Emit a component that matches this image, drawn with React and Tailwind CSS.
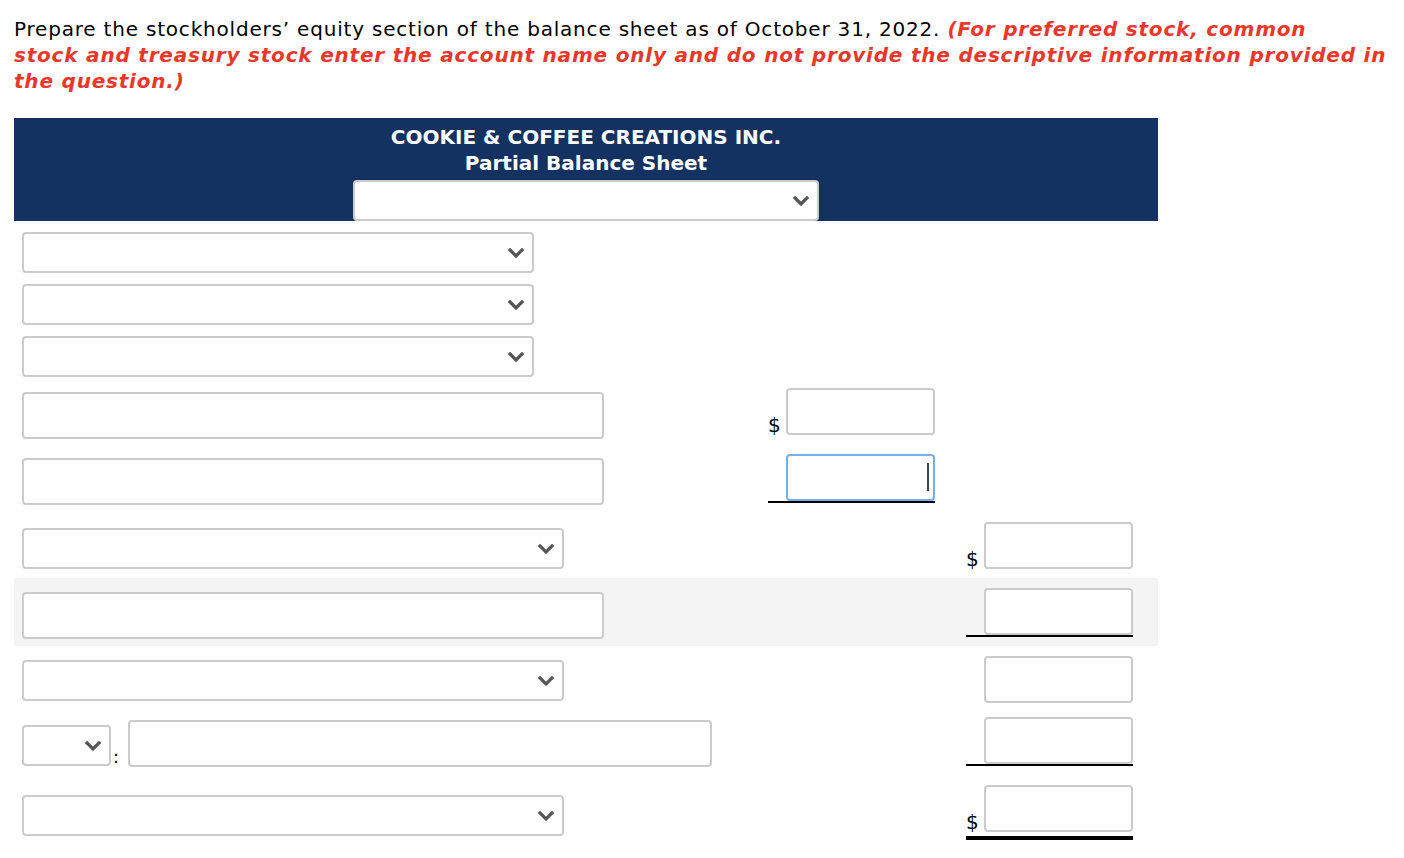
import React from 'react';

const font = { fontFamily: '"DejaVu Sans", Verdana, sans-serif' };

const Chevron = () => (
  <svg width="16" height="12" viewBox="0 0 16 12" className="shrink-0">
    <polyline points="2,3 8,9 14,3" fill="none" stroke="#555" strokeWidth="3.2" strokeLinecap="square" />
  </svg>
);

const Select = ({ className = '' }) => (
  <div className={`flex h-[41px] items-center justify-end rounded-[4px] border-2 border-[#cbcbcb] bg-white pr-[8px] ${className}`}>
    <Chevron />
  </div>
);

const Input = ({ className = '', focused = false }) => (
  <div
    className={`relative h-[47px] rounded-[4px] border-2 bg-white ${focused ? 'border-[#78aee6]' : 'border-[#cbcbcb]'} ${className}`}
  >
    {focused && <div className="absolute right-[4px] top-[7px] h-[28px] w-[2px] bg-[#444]" />}
  </div>
);

const Amount = ({ dollar, line, focused }) => (
  <div className={`flex w-[167px] items-end ${line === 'thin' ? 'border-b-2 border-black' : ''} ${line === 'thick' ? 'border-b-[4px] border-black pb-[4px]' : ''}`}>
    <span className="w-[18px] text-[20px] leading-[20px] text-black">{dollar ? '$' : ''}</span>
    <Input className="w-[149px]" focused={focused} />
  </div>
);

const Row = ({ left, mid, right, className = '' }) => (
  <div className={`flex pl-[8px] ${className}`}>
    <div className="w-[746px]">{left}</div>
    <div className="w-[167px]">{mid}</div>
    <div className="w-[31px]" />
    <div className="w-[167px]">{right}</div>
  </div>
);

export default function App() {
  return (
    <div className="min-h-[858px] bg-white pl-[14px] pt-[16px]" style={font}>
      <p className="text-[20px] leading-[26px] tracking-[0.8px] text-black">
        Prepare the stockholders’ equity section of the balance sheet as of October 31, 2022.{' '}
        <span className="font-bold italic text-[#e8382b]">
          (For preferred stock, common
          <br />
          stock and treasury stock enter the account name only and do not provide the descriptive information provided in
          <br />
          the question.)
        </span>
      </p>

      <div className="mt-[24px] w-[1144px]">
        <div className="flex flex-col items-center bg-[#133262] pt-[6px] text-white">
          <div className="text-[20px] font-bold leading-[26px]">COOKIE &amp; COFFEE CREATIONS INC.</div>
          <div className="text-[20px] font-bold leading-[26px]">Partial Balance Sheet</div>
          <Select className="mt-[4px] w-[466px]" />
        </div>

        <Row className="pt-[11px]" left={<Select className="w-[512px]" />} />
        <Row className="pt-[11px]" left={<Select className="w-[512px]" />} />
        <Row className="pt-[11px]" left={<Select className="w-[512px]" />} />
        <Row
          className="pt-[11px]"
          left={<Input className="mt-[4px] w-[582px]" />}
          mid={<Amount dollar />}
        />
        <Row
          className="pt-[15px]"
          left={<Input className="mt-[4px] w-[582px]" />}
          mid={<Amount line="thin" focused />}
        />
        <Row
          className="pt-[17px]"
          left={<Select className="mt-[6px] w-[542px]" />}
          right={<Amount dollar />}
        />
        <Row
          className="mt-[9px] bg-[#f4f4f4] pb-[7px] pt-[10px]"
          left={<Input className="mt-[4px] w-[582px]" />}
          right={<Amount line="thin" />}
        />
        <Row
          className="pt-[10px]"
          left={<Select className="mt-[4px] w-[542px]" />}
          right={<Amount />}
        />
        <Row
          className="pt-[14px]"
          left={
            <div className="flex items-end">
              <Select className="mb-[1px] mt-[8px] w-[89px]" />
              <span className="ml-[2px] mr-[9px] text-[18px] leading-[20px]">:</span>
              <Input className="w-[584px]" />
            </div>
          }
          right={<Amount line="thin" />}
        />
        <Row
          className="pt-[18px]"
          left={<Select className="mt-[10px] w-[542px]" />}
          right={<Amount dollar line="thick" />}
        />
      </div>
    </div>
  );
}
